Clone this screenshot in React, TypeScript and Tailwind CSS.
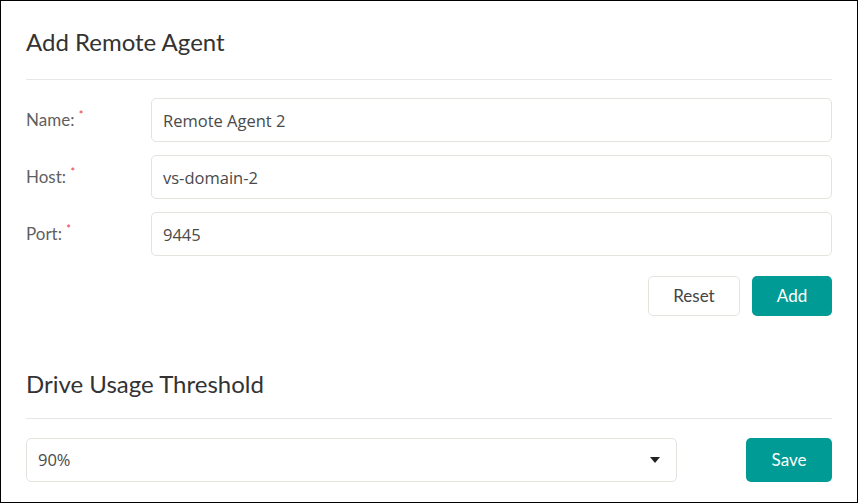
import React, { useState } from 'react';

const labelFont = { fontFamily: 'Lato, "Open Sans", sans-serif' };

interface FieldProps {
  label: string;
  value: string;
  onChange: (v: string) => void;
}

const Field: React.FC<FieldProps> = ({ label, value, onChange }) => (
  <div className="flex items-center h-[44px]">
    <label className="w-[125px] shrink-0 text-[17px] text-[#5f5f5f]" style={labelFont}>
      {label}: <span className="text-[#e8334a] text-[11px] align-top">*</span>
    </label>
    <input
      type="text"
      value={value}
      onChange={(e) => onChange(e.target.value)}
      className="flex-1 h-[44px] px-[11px] border border-[#e6e3de] rounded-[5px] text-[16.5px] text-[#4a4a4a] outline-none font-['Open_Sans',sans-serif]"
    />
  </div>
);

const App: React.FC = () => {
  const [name, setName] = useState('Remote Agent 2');
  const [host, setHost] = useState('vs-domain-2');
  const [port, setPort] = useState('9445');
  const [threshold, setThreshold] = useState('90%');

  return (
    <div className="w-[858px] h-[503px] border border-black bg-white px-[25px] overflow-hidden" style={labelFont}>
      {/* Add Remote Agent */}
      <div className="h-[79px] flex items-center border-b border-[#e9e7e3]">
        <h2 className="text-[24px] text-[#333] pt-[4px]">Add Remote Agent</h2>
      </div>

      <div className="flex flex-col gap-[13px] mt-[18px]">
        <Field label="Name" value={name} onChange={setName} />
        <Field label="Host" value={host} onChange={setHost} />
        <Field label="Port" value={port} onChange={setPort} />
      </div>

      <div className="flex justify-end gap-[12px] mt-[20px]">
        <button className="w-[92px] h-[40px] border border-[#e6e3de] rounded-[5px] bg-white text-[17px] text-[#444]">
          Reset
        </button>
        <button className="w-[80px] h-[40px] rounded-[5px] bg-[#009b95] text-[17px] text-white">
          Add
        </button>
      </div>

      {/* Drive Usage Threshold */}
      <div className="h-[103px] flex items-center border-b border-[#e9e7e3]">
        <h2 className="text-[24px] text-[#333] pt-[34px]">Drive Usage Threshold</h2>
      </div>

      <div className="flex items-center justify-between mt-[19px]">
        <div className="relative w-[651px]">
          <select
            value={threshold}
            onChange={(e) => setThreshold(e.target.value)}
            className="appearance-none w-full h-[44px] pl-[11px] border border-[#e6e3de] rounded-[5px] bg-white text-[16.5px] text-[#4a4a4a] outline-none font-['Open_Sans',sans-serif]"
          >
            <option>70%</option>
            <option>80%</option>
            <option>90%</option>
            <option>95%</option>
          </select>
          <svg className="absolute right-[17px] top-[19px] pointer-events-none" width="10" height="6" viewBox="0 0 10 6">
            <path d="M0 0h10L5 6z" fill="#222" />
          </svg>
        </div>
        <button className="w-[86px] h-[44px] rounded-[5px] bg-[#009b95] text-[17px] text-white">
          Save
        </button>
      </div>
    </div>
  );
};

export default App;
